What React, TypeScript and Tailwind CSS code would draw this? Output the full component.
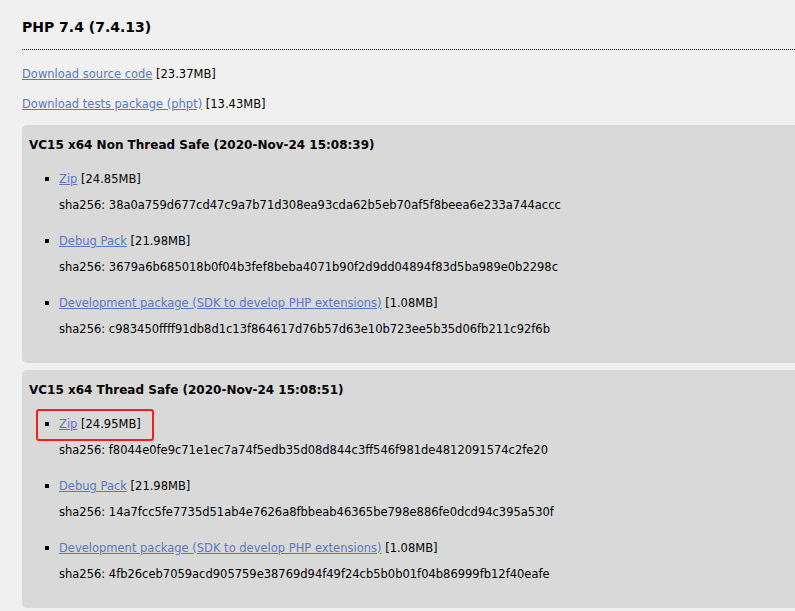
const builds = [
  {
    title: "VC15 x64 Non Thread Safe (2020-Nov-24 15:08:39)",
    items: [
      { name: "Zip", size: "24.85MB", sha: "38a0a759d677cd47c9a7b71d308ea93cda62b5eb70af5f8beea6e233a744accc" },
      { name: "Debug Pack", size: "21.98MB", sha: "3679a6b685018b0f04b3fef8beba4071b90f2d9dd04894f83d5ba989e0b2298c" },
      {
        name: "Development package (SDK to develop PHP extensions)",
        size: "1.08MB",
        sha: "c983450ffff91db8d1c13f864617d76b57d63e10b723ee5b35d06fb211c92f6b",
      },
    ],
  },
  {
    title: "VC15 x64 Thread Safe (2020-Nov-24 15:08:51)",
    items: [
      { name: "Zip", size: "24.95MB", sha: "f8044e0fe9c71e1ec7a74f5edb35d08d844c3ff546f981de4812091574c2fe20", marked: true },
      { name: "Debug Pack", size: "21.98MB", sha: "14a7fcc5fe7735d51ab4e7626a8fbbeab46365be798e886fe0dcd94c395a530f" },
      {
        name: "Development package (SDK to develop PHP extensions)",
        size: "1.08MB",
        sha: "4fb26ceb7059acd905759e38769d94f49f24cb5b0b01f04b86999fb12f40eafe",
      },
    ],
  },
];

type Item = { name: string; size: string; sha: string; marked?: boolean };

function BuildItem({ item, first }: { item: Item; first: boolean }) {
  return (
    <li className={first ? "mt-[16px]" : "mt-[18px]"}>
      <div className="relative flex items-center h-[18px]">
        <span className="ml-[23px] w-[4px] h-[4px] bg-black" />
        <span className="ml-[10px]">
          <a href="#" className="text-[#5b76c4] underline">
            {item.name}
          </a>{" "}
          [{item.size}]
        </span>
        {item.marked && (
          <div className="absolute left-[14px] top-[-6px] w-[118px] h-[32px] border-2 border-[#f0201c] rounded-[3px]" />
        )}
      </div>
      <div className="mt-[8px] ml-[37px] h-[18px] leading-[18px] whitespace-nowrap">sha256: {item.sha}</div>
    </li>
  );
}

export default function App() {
  return (
    <div
      className="min-h-screen bg-[#f0f0f0] text-black pl-[22px] overflow-hidden text-[11.5px] leading-[18px]"
      style={{ fontFamily: '"DejaVu Sans", Verdana, sans-serif' }}
    >
      <h1 className="pt-[17px] text-[14px] leading-[20px] font-bold">PHP 7.4 (7.4.13)</h1>
      <div className="mt-[12px] border-t border-dotted border-black" />

      <p className="mt-[15px]">
        <a href="#" className="text-[#5b76c4] underline">
          Download source code
        </a>{" "}
        [23.37MB]
      </p>
      <p className="mt-[12px]">
        <a href="#" className="text-[#5b76c4] underline">
          Download tests package (phpt)
        </a>{" "}
        [13.43MB]
      </p>

      {builds.map((b, i) => (
        <section
          key={b.title}
          className={`${i === 0 ? "mt-[12px]" : "mt-[7px]"} bg-[#d9d9d9] rounded-l-[5px] pt-[11px] pb-[25px] whitespace-nowrap`}
        >
          <h3 className="pl-[7px] text-[12px] font-bold h-[18px]">{b.title}</h3>
          <ul>
            {b.items.map((it, j) => (
              <BuildItem key={it.name} item={it} first={j === 0} />
            ))}
          </ul>
        </section>
      ))}
    </div>
  );
}
